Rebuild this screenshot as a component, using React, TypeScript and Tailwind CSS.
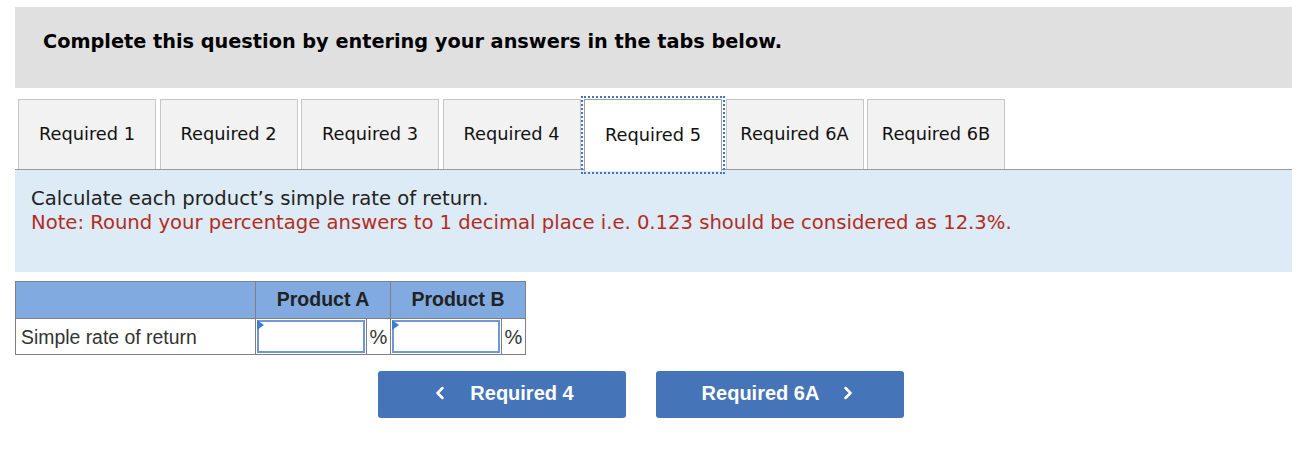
import { ChevronLeft, ChevronRight } from "lucide-react";

const TABS = ["Required 1", "Required 2", "Required 3", "Required 4", "Required 5", "Required 6A", "Required 6B"];
const ACTIVE = "Required 5";

function AnswerCell() {
  return (
    <>
      <td className="border border-[#808080] p-0 h-[36px] w-[110px]">
        <div className="relative h-full w-[110px] p-[1px]">
          <div className="h-full w-full border-2 border-[#6f98d4] bg-white" />
          <span className="absolute left-[1px] top-[1px] w-0 h-0 border-t-[5px] border-b-[5px] border-l-[7px] border-t-transparent border-b-transparent border-l-[#3f7bd0]" />
        </div>
      </td>
      <td className="border border-[#808080] w-[24px] text-center text-[20px] text-[#333] p-0">%</td>
    </>
  );
}

export default function App() {
  return (
    <div className="w-[1306px] h-[463px] bg-white pt-[7px] pl-[15px]">
      {/* instructions banner */}
      <div className="w-[1277px] h-[81px] bg-[#e0e0e0] pl-[28px] pt-[21px]">
        <p className="font-['DejaVu_Sans',Verdana,sans-serif] font-bold text-[19.3px] leading-[28px] text-black">
          Complete this question by entering your answers in the tabs below.
        </p>
      </div>

      {/* tab strip */}
      <div className="flex gap-[3.5px] mt-[11px] pl-[3px] h-[70px] items-end">
        {TABS.map((t) => {
          const active = t === ACTIVE;
          return (
            <div
              key={t}
              className={`w-[138px] h-[70px] flex items-center justify-center font-['DejaVu_Sans',Verdana,sans-serif] text-[17.8px] text-[#111] border ${
                active
                  ? "bg-white border-[#a0a0a0] border-b-0 outline-[2px] outline-dotted outline-[#4472c4] outline-offset-[1px] relative z-10 h-[72px] -mb-[2px]"
                  : "bg-[#f2f2f2] border-[#c6c6c6] border-b-0"
              }`}
            >
              {t}
            </div>
          );
        })}
      </div>

      {/* question panel */}
      <div className="w-[1277px] h-[103px] bg-[#ddebf7] border-t border-[#999] pl-[16px] pt-[17px] font-['DejaVu_Sans',Verdana,sans-serif] text-[19.6px] leading-[24px]">
        <p className="text-[#222]">Calculate each product’s simple rate of return.</p>
        <p className="text-[#b22d1f]">Note: Round your percentage answers to 1 decimal place i.e. 0.123 should be considered as 12.3%.</p>
      </div>

      {/* answer table */}
      <table className="mt-[9px] border-collapse font-['Liberation_Sans',Arial,sans-serif]">
        <thead>
          <tr className="bg-[#80aae0] h-[37px]">
            <th className="border border-[#808080] w-[240px]" />
            <th colSpan={2} className="border border-[#808080] text-[19.5px] font-bold text-[#222]">Product A</th>
            <th colSpan={2} className="border border-[#808080] text-[19.5px] font-bold text-[#222]">Product B</th>
          </tr>
        </thead>
        <tbody>
          <tr>
            <td className="border border-[#808080] pl-[5px] text-[19.4px] text-[#333] leading-[22px]">Simple rate of return</td>
            <AnswerCell />
            <AnswerCell />
          </tr>
        </tbody>
      </table>

      {/* navigation */}
      <div className="flex gap-[30px] mt-[16px] ml-[363px] font-['Liberation_Sans',Arial,sans-serif]">
        <button className="w-[248px] h-[47px] bg-[#4674b8] rounded-[3px] text-white font-bold text-[20px] leading-[22px] pb-[3px] flex items-center justify-center gap-[20px]">
          <ChevronLeft size={20} strokeWidth={3} />
          <span>Required 4</span>
        </button>
        <button className="w-[248px] h-[47px] bg-[#4674b8] rounded-[3px] text-white font-bold text-[20px] leading-[22px] pb-[3px] flex items-center justify-center gap-[19px]">
          <span>Required 6A</span>
          <ChevronRight size={20} strokeWidth={3} />
        </button>
      </div>
    </div>
  );
}
